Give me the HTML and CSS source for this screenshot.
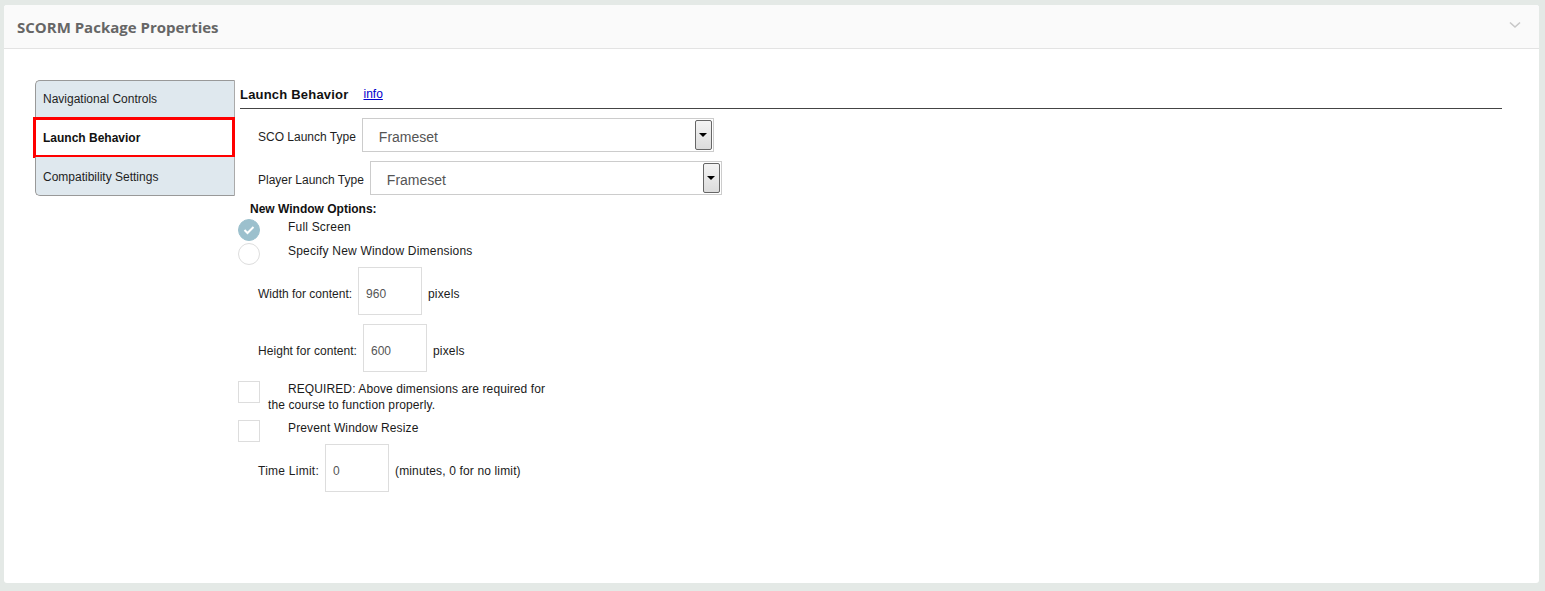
FILE: index.html
```html
<!DOCTYPE html>
<html>
<head>
<meta charset="utf-8">
<link rel="stylesheet" href="styles.css">
</head>
<body>
<div class="card">
  <div class="card-header">
    <h1 class="title">SCORM Package Properties</h1>
    <svg class="chevron" width="12" height="8" viewBox="0 0 12 8"><path d="M1 1.5 L6 6 L11 1.5" fill="none" stroke="#c8c8c8" stroke-width="1.6"/></svg>
  </div>
  <div class="card-body">
    <div class="tabs">
      <div class="tab tab-first">Navigational Controls</div>
      <div class="tab tab-active">Launch Behavior</div>
      <div class="tab tab-last">Compatibility Settings</div>
    </div>
    <div class="content">
      <div class="section-head">
        <span class="section-title">Launch Behavior</span>
        <a class="info" href="#">info</a>
      </div>
      <div class="row row-sco">
        <span class="label">SCO Launch Type</span>
        <div class="select"><span class="select-text">Frameset</span><span class="select-btn"><span class="arrow"></span></span></div>
      </div>
      <div class="row row-player">
        <span class="label">Player Launch Type</span>
        <div class="select"><span class="select-text">Frameset</span><span class="select-btn"><span class="arrow"></span></span></div>
      </div>
      <div class="subhead">New Window Options:</div>
      <div class="radio-row radio-first">
        <span class="radio checked"><svg width="12" height="10" viewBox="0 0 12 10"><path d="M1.5 5 L4.5 8 L10.5 2" fill="none" stroke="#fff" stroke-width="2"/></svg></span>
        <span class="radio-label">Full Screen</span>
      </div>
      <div class="radio-row">
        <span class="radio"></span>
        <span class="radio-label">Specify New Window Dimensions</span>
      </div>
      <div class="dim-row dim-width">
        <span class="label">Width for content:</span>
        <span class="box">960</span>
        <span class="unit">pixels</span>
      </div>
      <div class="dim-row dim-height">
        <span class="label">Height for content:</span>
        <span class="box">600</span>
        <span class="unit">pixels</span>
      </div>
      <div class="check-block">
        <span class="checkbox"></span><span class="check-text">REQUIRED: Above dimensions are required for the course to function properly.</span>
      </div>
      <div class="check-row">
        <span class="checkbox"></span><span class="check-text">Prevent Window Resize</span>
      </div>
      <div class="dim-row dim-time">
        <span class="label">Time Limit:</span>
        <span class="box">0</span>
        <span class="unit">(minutes, 0 for no limit)</span>
      </div>
    </div>
  </div>
</div>
</body>
</html>
```

FILE: styles.css
```css
html, body {
  margin: 0;
  padding: 0;
}
body {
  background: #e4e9e6;
  padding: 5px 6px 8px 4px;
  font-family: "Liberation Sans", Arial, sans-serif;
  font-size: 12px;
  color: #1a1a1a;
}
.card {
  background: #fff;
  border-radius: 3px;
  height: 578px;
  overflow: hidden;
}
.card-header {
  height: 43px;
  background: #fafafa;
  border-bottom: 1px solid #e3e3e3;
  display: flex;
  align-items: center;
  justify-content: space-between;
  padding: 0 18px 0 13px;
}
.title {
  margin: 0;
  font-family: "Open Sans", sans-serif;
  font-weight: 700;
  font-size: 15px;
  color: #666;
}
.chevron {
  position: relative;
  top: -2px;
}
.card-body {
  display: flex;
  padding: 31px 0 0 31px;
}
.tabs {
  width: 200px;
  display: flex;
  flex-direction: column;
}
.tab {
  height: 38px;
  box-sizing: border-box;
  background: #dfe8ee;
  border: 1px solid #999;
  border-right: 1px solid #aaa;
  padding-left: 7px;
  display: flex;
  align-items: center;
  color: #1e1e1e;
}
.tab-first {
  border-radius: 5px 0 0 0;
  border-bottom: none;
  padding-bottom: 2px;
}
.tab-last {
  height: 39px;
  border-radius: 0 0 0 5px;
  border-top: none;
  padding-top: 1px;
}
.tab-active {
  height: 41px;
  margin: -1px 0 -1px -2px;
  border: 3px solid #f00;
  background: #fff;
  font-weight: 700;
  padding-left: 7px;
  color: #111;
}
.content {
  margin-left: 5px;
  width: 1262px;
}
.section-head {
  height: 29px;
  border-bottom: 1px solid #444;
  display: flex;
  align-items: center;
  box-sizing: border-box;
}
.section-title {
  font-size: 13px;
  font-weight: 700;
  color: #111;
  letter-spacing: 0.2px;
}
.info {
  margin-left: 15px;
  color: #00c;
  font-size: 12px;
}
.row {
  display: flex;
  align-items: center;
  padding-left: 18px;
}
.row-sco {
  margin-top: 9px;
}
.row-player {
  margin-top: 9px;
}
.row .label {
  padding-top: 3px;
}
.label {
  color: #1e1e1e;
}
.select {
  margin-left: 6px;
  width: 352px;
  height: 34px;
  box-sizing: border-box;
  border: 1px solid #ccc;
  display: flex;
  align-items: center;
  justify-content: space-between;
  padding: 0 1px 0 16px;
}
.select-text {
  font-size: 14px;
  color: #555;
  padding-top: 3px;
}
.select-btn {
  width: 17px;
  height: 30px;
  box-sizing: border-box;
  border: 1px solid #666;
  border-radius: 2px;
  background: linear-gradient(#f4f4f4, #dcdcdc);
  display: flex;
  align-items: center;
  justify-content: center;
}
.arrow {
  width: 0;
  height: 0;
  border-left: 4px solid transparent;
  border-right: 4px solid transparent;
  border-top: 4px solid #000;
}
.subhead {
  font-weight: 700;
  margin: 7px 0 0 10px;
  line-height: 15px;
  color: #111;
}
.radio-row {
  display: flex;
  align-items: flex-start;
  margin-left: -2px;
  height: 24px;
}
.radio-first {
  margin-top: 3px;
}
.radio-first .radio {
  margin-top: -1px;
}
.radio-first + .radio-row .radio {
  margin-top: -1px;
}
.radio {
  width: 22px;
  height: 22px;
  box-sizing: border-box;
  border-radius: 50%;
  border: 1px solid #ddd;
  display: flex;
  align-items: center;
  justify-content: center;
  flex: none;
}
.radio.checked {
  background: #9cc0cd;
  border-color: #9cc0cd;
}
.radio-label {
  margin-left: 28px;
  line-height: 14px;
  letter-spacing: 0.2px;
}
.dim-row {
  display: flex;
  align-items: center;
  padding-left: 18px;
}
.dim-row .label,
.dim-row .unit {
  padding-top: 5px;
}
.dim-width {
  margin-top: -1px;
}
.dim-height {
  margin-top: 9px;
}
.dim-height .label {
  letter-spacing: 0.05px;
}
.dim-time .label {
  letter-spacing: 0.25px;
}
.box {
  width: 64px;
  height: 48px;
  box-sizing: border-box;
  border: 1px solid #ddd;
  margin-left: 6px;
  display: flex;
  align-items: center;
  padding: 5px 0 0 7px;
  color: #555;
}
.unit {
  margin-left: 6px;
  letter-spacing: 0.15px;
}
.check-block {
  margin: 9px 0 0 -2px;
  width: 290px;
  padding-left: 30px;
  line-height: 16px;
  overflow: hidden;
}
.check-block .checkbox {
  float: left;
  margin-left: -30px;
}
.check-block .check-text {
  display: block;
  text-indent: 20px;
  letter-spacing: 0.1px;
}
.checkbox {
  width: 22px;
  height: 22px;
  box-sizing: border-box;
  border: 1px solid #ddd;
  display: inline-block;
  flex: none;
}
.check-row {
  display: flex;
  align-items: flex-start;
  margin: 7px 0 0 -2px;
}
.check-row .check-text {
  margin-left: 28px;
  line-height: 14px;
  padding-top: 1px;
  letter-spacing: 0.15px;
}
.dim-time {
  margin-top: 2px;
}
```
